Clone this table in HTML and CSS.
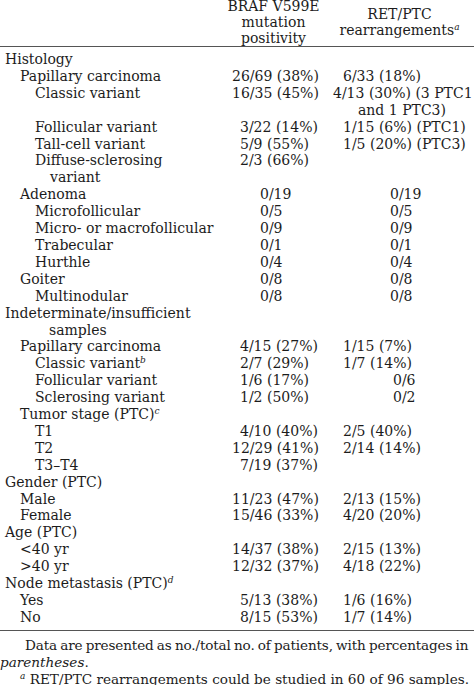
FILE: index.html
```html
<!DOCTYPE html>
<html>
<head>
<meta charset="utf-8">
<link rel="stylesheet" href="styles.css">
</head>
<body>
<table class="tbl">
  <colgroup><col class="c1"><col class="c2"><col class="c3"></colgroup>
  <thead>
    <tr>
      <th></th>
      <th class="h2">BRAF V599E<br>mutation<br>positivity</th>
      <th class="h3">RET/PTC<br>rearrangements<sup>a</sup></th>
    </tr>
  </thead>
  <tbody>
    <tr class="first"><td class="l0">Histology</td><td></td><td></td></tr>
    <tr><td class="l1">Papillary carcinoma</td><td class="p10">26/69 (38%)</td><td class="q18">6/33 (18%)</td></tr>
    <tr><td class="l2">Classic variant</td><td class="p10">16/35 (45%)</td><td class="q8"><span class="blk">4/13 (30%) (3 PTC1</span><span class="blk cont3">and 1 PTC3)</span></td></tr>
    <tr><td class="l2">Follicular variant</td><td class="p18">3/22 (14%)</td><td class="q18">1/15 (6%) (PTC1)</td></tr>
    <tr><td class="l2">Tall-cell variant</td><td class="p18">5/9 (55%)</td><td class="q18">1/5 (20%) (PTC3)</td></tr>
    <tr><td class="l2"><span class="blk">Diffuse-sclerosing</span><span class="blk cont">variant</span></td><td class="p18">2/3 (66%)</td><td></td></tr>
    <tr><td class="l1">Adenoma</td><td class="p38">0/19</td><td class="q65">0/19</td></tr>
    <tr><td class="l2">Microfollicular</td><td class="p38">0/5</td><td class="q65">0/5</td></tr>
    <tr><td class="l2">Micro- or macrofollicular</td><td class="p38">0/9</td><td class="q65">0/9</td></tr>
    <tr><td class="l2">Trabecular</td><td class="p38">0/1</td><td class="q65">0/1</td></tr>
    <tr><td class="l2">Hurthle</td><td class="p38">0/4</td><td class="q65">0/4</td></tr>
    <tr><td class="l1">Goiter</td><td class="p38">0/8</td><td class="q65">0/8</td></tr>
    <tr><td class="l2">Multinodular</td><td class="p38">0/8</td><td class="q65">0/8</td></tr>
    <tr><td class="l0"><span class="blk">Indeterminate/insufficient</span><span class="blk cont0">samples</span></td><td></td><td></td></tr>
    <tr><td class="l1">Papillary carcinoma</td><td class="p18">4/15 (27%)</td><td class="q18">1/15 (7%)</td></tr>
    <tr><td class="l2">Classic variant<sup>b</sup></td><td class="p18">2/7 (29%)</td><td class="q18">1/7 (14%)</td></tr>
    <tr><td class="l2">Follicular variant</td><td class="p18">1/6 (17%)</td><td class="q68">0/6</td></tr>
    <tr><td class="l2">Sclerosing variant</td><td class="p18">1/2 (50%)</td><td class="q68">0/2</td></tr>
    <tr><td class="l1">Tumor stage (PTC)<sup>c</sup></td><td></td><td></td></tr>
    <tr><td class="l2">T1</td><td class="p18">4/10 (40%)</td><td class="q18">2/5 (40%)</td></tr>
    <tr><td class="l2">T2</td><td class="p10">12/29 (41%)</td><td class="q18">2/14 (14%)</td></tr>
    <tr><td class="l2">T3–T4</td><td class="p18">7/19 (37%)</td><td></td></tr>
    <tr><td class="l0">Gender (PTC)</td><td></td><td></td></tr>
    <tr><td class="l1">Male</td><td class="p10">11/23 (47%)</td><td class="q18">2/13 (15%)</td></tr>
    <tr><td class="l1">Female</td><td class="p10">15/46 (33%)</td><td class="q18">4/20 (20%)</td></tr>
    <tr><td class="l0">Age (PTC)</td><td></td><td></td></tr>
    <tr><td class="l1">&lt;40 yr</td><td class="p10">14/37 (38%)</td><td class="q18">2/15 (13%)</td></tr>
    <tr><td class="l1">&gt;40 yr</td><td class="p10">12/32 (37%)</td><td class="q18">4/18 (22%)</td></tr>
    <tr><td class="l0">Node metastasis (PTC)<sup>d</sup></td><td></td><td></td></tr>
    <tr><td class="l1">Yes</td><td class="p18">5/13 (38%)</td><td class="q18">1/6 (16%)</td></tr>
    <tr class="last"><td class="l1">No</td><td class="p18">8/15 (53%)</td><td class="q18">1/7 (14%)</td></tr>
  </tbody>
</table>
<div class="notes">
  <p class="note1"><span class="tight">Data are presented as no./total no. of patients, with percentages in</span><br><em>parentheses</em>.</p>
  <p class="note2"><sup>a</sup> RET/PTC rearrangements could be studied in 60 of 96 samples.</p>
</div>
</body>
</html>
```

FILE: styles.css
```css
html, body {
  margin: 0;
  padding: 0;
  background: #ffffff;
}
body {
  width: 474px;
  height: 685px;
  overflow: hidden;
  font-family: "DejaVu Serif", "Liberation Serif", serif;
  font-size: 14px;
  color: #1c1c1c;
}
.tbl {
  width: 474px;
  border-collapse: collapse;
  table-layout: fixed;
  margin-top: -2px;
}
.c1 { width: 222px; }
.c2 { width: 103px; }
.c3 { width: 149px; }
th {
  font-weight: normal;
  line-height: 16px;
  padding: 0;
  text-align: center;
  vertical-align: middle;
  border-bottom: 1.5px solid #555;
}
td {
  padding: 0;
  line-height: 16.9px;
  vertical-align: top;
  white-space: nowrap;
  text-align: left;
}
tr.first td { padding-top: 4px; }
tr.last td { padding-bottom: 4px; border-bottom: 1.5px solid #555; }
sup {
  font-style: italic;
  font-size: 9px;
  line-height: 0;
  vertical-align: 5px;
}
.blk { display: block; }
.l0 { padding-left: 5px; }
.l1 { padding-left: 20px; }
.l2 { padding-left: 35px; }
.cont { padding-left: 15px; }
.cont0 { padding-left: 44px; }
.cont3 { padding-left: 25px; }
.p10 { padding-left: 10px; }
.p18 { padding-left: 18px; }
.p38 { padding-left: 38px; }
.q8 { padding-left: 8px; }
.q18 { padding-left: 18px; }
.q65 { padding-left: 65px; }
.q68 { padding-left: 68px; }
.notes {
  margin-top: 6px;
  line-height: 17px;
  font-size: 13.6px;
}
.notes p { margin: 0; white-space: nowrap; }
.note1 { text-indent: 25px; margin-left: -2px; }
.tight { letter-spacing: -0.15px; word-spacing: -0.9px; }
.note2 { padding-left: 20px; }
```
